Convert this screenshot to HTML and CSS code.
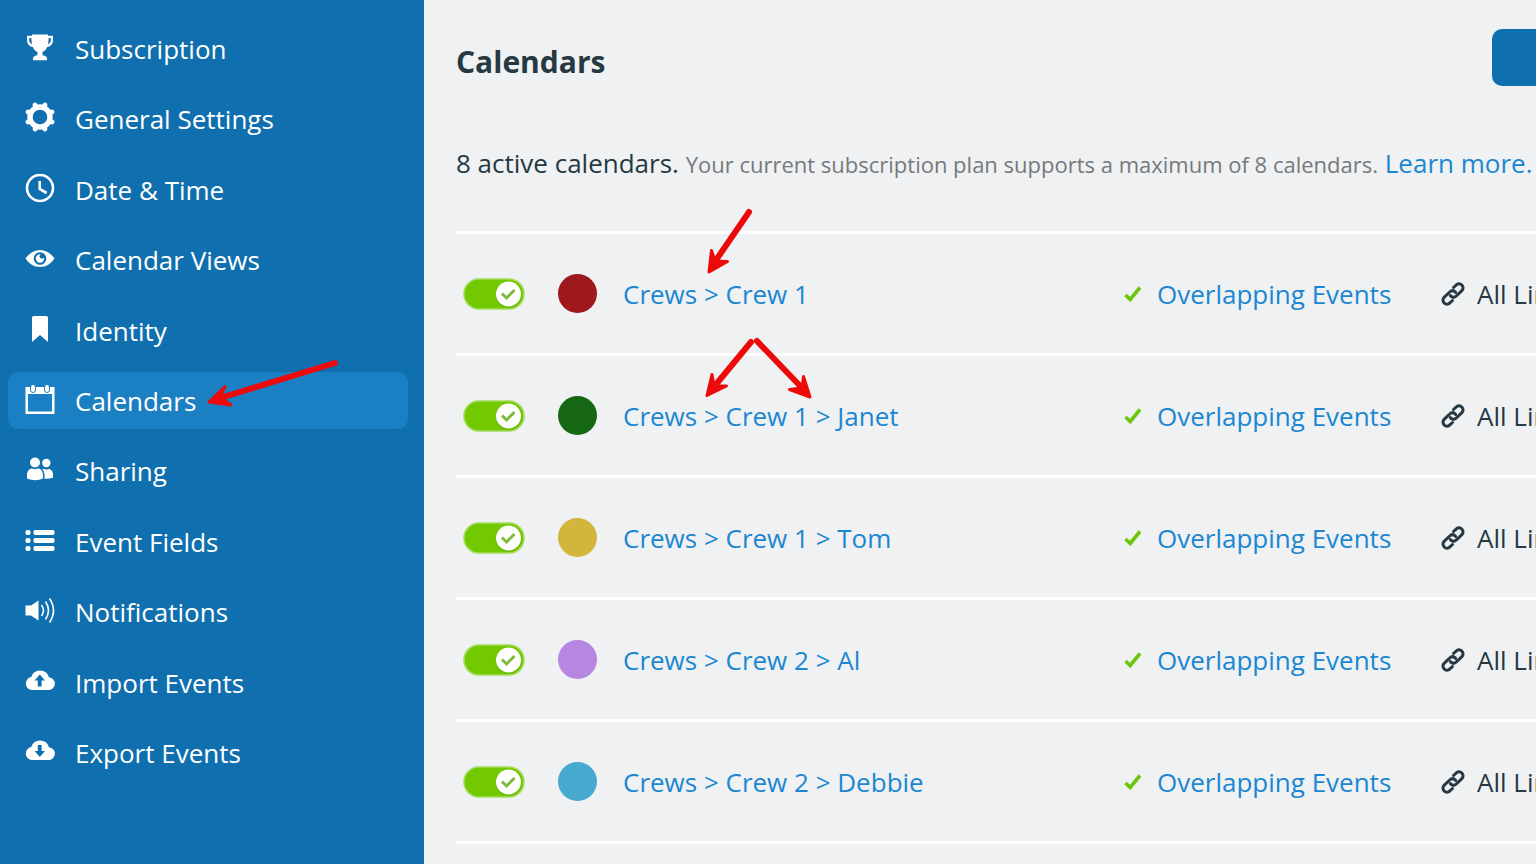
FILE: index.html
```
<!DOCTYPE html>
<html lang="en">
<head>
    <meta charset="UTF-8">
    <meta name="viewport" content="width=device-width, initial-scale=1.0">
    <title>Calendars</title>
    <link rel="stylesheet" href="styles.css">
</head>
<body>
    <!-- shared icons -->
    <svg class="sprite" aria-hidden="true">
        <symbol id="toggle-on" viewBox="0 0 62 32">
            <rect x="1" y="1" width="60" height="30" rx="15" fill="#73c900" stroke="#a3dc5c" stroke-width="1.5"/>
            <circle cx="45.500" cy="16.800" r="13" fill="#5aa500" opacity="0.5"/>
            <circle cx="45.500" cy="16" r="12.500" fill="#fff"/>
            <path d="M39 15.500l4.500 4.500 8-8" fill="none" stroke="#7dbb3c" stroke-width="3"/>
        </symbol>
        <symbol id="tick" viewBox="0 0 18 16">
            <path d="M1.500 9l4.700 4.500L16 1.500" fill="none" stroke="#6cc70c" stroke-width="3.600"/>
        </symbol>
        <symbol id="chain" viewBox="0 0 24 24">
            <g fill="none" stroke="#263943" stroke-width="3" stroke-linecap="round">
                <path d="M12.500 5.500l2.600-2.400a3.900 3.900 0 0 1 5.800 5.600l-5.600 5.300a4 4 0 0 1-5.300.3l-.7-.8"/>
                <path d="M11.500 18.500l-2.600 2.400a3.900 3.900 0 0 1-5.800-5.600l5.600-5.300a4 4 0 0 1 5.300-.3l.7.8"/>
            </g>
        </symbol>
    </svg>

    <div class="page">
        <nav class="sidebar">
            <a class="nav-item" href="#subscription">
                <svg class="nav-icon" viewBox="0 0 30 30"><path fill-rule="evenodd" d="M7 2.500h16v1.200h5V8c0 4-2.300 6.500-5.800 7-1 2.700-2.700 4.400-4.700 5v3.200c2 .4 4.500 1 4.500 3v2H8v-2c0-2 2.500-2.600 4.500-3V20c-2-.6-3.700-2.300-4.700-5C4.300 14.500 2 12 2 8V3.700h5zM4.200 6v2c0 2 .9 3.600 2.700 4.200L6.300 6zM23.700 6l-.6 6.200c1.800-.6 2.700-2.200 2.700-4.200V6z"/></svg>
                Subscription
            </a>
            <a class="nav-item" href="#general">
                <svg class="nav-icon" viewBox="0 0 30 30">
                    <circle cx="15" cy="15" r="10" fill="none" stroke="#fff" stroke-width="5.400"/>
                    <g stroke="#fff" stroke-width="4.600" stroke-linecap="round">
                        <path d="M20 2.900l-1 2.500M10 2.900l1 2.500M27.100 10l-2.500 1M27.100 20l-2.500-1M20 27.100l-1-2.500M10 27.100l1-2.500M2.900 20l2.500-1M2.900 10l2.500 1"/>
                    </g>
                </svg>
                General Settings
            </a>
            <a class="nav-item" href="#date-time">
                <svg class="nav-icon" viewBox="0 0 30 30"><g fill="none" stroke="#fff" stroke-width="2.600"><circle cx="15" cy="15" r="13"/><path d="M14.700 8v8l7 4"/></g></svg>
                Date &amp; Time
            </a>
            <a class="nav-item" href="#views">
                <svg class="nav-icon" viewBox="0 0 30 30">
                    <path d="M.5 15.500C4 10.500 9 7 15 7s11 3.500 14.500 8.500C26 20.500 21 24 15 24S4 20.500.5 15.500z"/>
                    <circle class="nav-icon-cut" cx="15" cy="15.500" r="6.300"/>
                    <circle cx="15" cy="15.500" r="4.200"/>
                    <circle class="nav-icon-cut" cx="17" cy="13.300" r="2.400"/>
                </svg>
                Calendar Views
            </a>
            <a class="nav-item" href="#identity">
                <svg class="nav-icon" viewBox="0 0 30 30"><path d="M8.500 2h13q1.500 0 1.500 1.500V28l-8-7-8 7V3.500Q7 2 8.500 2z"/></svg>
                Identity
            </a>
            <a class="nav-item active" href="#calendars" aria-current="page">
                <svg class="nav-icon" viewBox="0 0 30 30">
                    <path fill-rule="evenodd" d="M.5 3h29v27H.5zM3 10v17.500h24V10z"/>
                    <g class="nav-icon-ring"><rect x="5.500" y="0.500" width="5" height="8" rx="2.500"/><rect x="19.500" y="0.500" width="5" height="8" rx="2.500"/></g>
                </svg>
                Calendars
            </a>
            <a class="nav-item" href="#sharing">
                <svg class="nav-icon" viewBox="0 0 30 30">
                    <circle cx="10" cy="8.500" r="5"/>
                    <path d="M2 24.500v-3.500c0-4 2.500-6.500 5-6.500q3 1.500 6 0c2.500 0 5 2.500 5 6.500v3.500q-8 3.500-16 0z"/>
                    <circle cx="21.300" cy="9" r="4.200"/>
                    <path d="M19.500 24.700V21c0-2.600-1-4.600-2.300-6h2.300q2 1 4 0c2.500 0 4.500 2.300 4.500 5.500v3.300q-4 1.200-8.500.9z"/>
                </svg>
                Sharing
            </a>
            <a class="nav-item" href="#fields">
                <svg class="nav-icon" viewBox="0 0 30 30">
                    <g><rect x=".5" y="5" width="5" height="5" rx="1.800"/><rect x=".5" y="13" width="5" height="5" rx="1.800"/><rect x=".5" y="21" width="5" height="5" rx="1.800"/>
                    <rect x="8.500" y="5" width="21" height="5" rx="1.800"/><rect x="8.500" y="13" width="21" height="5" rx="1.800"/><rect x="8.500" y="21" width="21" height="5" rx="1.800"/></g>
                </svg>
                Event Fields
            </a>
            <a class="nav-item" href="#notifications">
                <svg class="nav-icon" viewBox="0 0 30 30">
                    <path d="M.5 10.500H6l7.500-5v20l-7.500-5H.5z"/>
                    <g fill="none" stroke="#fff" stroke-width="1.600"><path d="M16.500 10q4 5.500 0 11M20.500 6.500q6 9 0 18M24.500 3.500q8 12 0 24"/></g>
                </svg>
                Notifications
            </a>
            <a class="nav-item" href="#import">
                <svg class="nav-icon" viewBox="0 0 30 30"><path fill-rule="evenodd" d="M7 24a6.500 6.500 0 0 1-.8-12.900A9.300 9.300 0 0 1 24 11.200 6.400 6.400 0 0 1 23 24zM12.800 20.500h3.800V14.500h3.400L14.800 8.500 9.500 14.500h3.300z"/></svg>
                Import Events
            </a>
            <a class="nav-item" href="#export">
                <svg class="nav-icon" viewBox="0 0 30 30"><path fill-rule="evenodd" d="M7 24a6.500 6.500 0 0 1-.8-12.900A9.300 9.300 0 0 1 24 11.200 6.400 6.400 0 0 1 23 24zM12.800 9h3.800v6h3.400l-5.200 6-5.300-6h3.300z"/></svg>
                Export Events
            </a>
        </nav>

        <main class="content">
            <header class="content-header">
                <h1>Calendars</h1>
                <button class="add-button" type="button" aria-label="Add Calendar"></button>
            </header>
            <p class="summary">8 active calendars. <small>Your current subscription plan supports a maximum of 8 calendars.</small> <a href="#learn">Learn more.</a></p>

            <ul class="calendar-list">
                <li class="calendar">
                    <label class="toggle"><input type="checkbox" aria-label="Crew 1 active" checked><svg><use href="#toggle-on"/></svg></label>
                    <span class="dot red"></span>
                    <a href="#crew-1">Crews &gt; Crew 1</a>
                    <span class="overlap"><svg class="tick"><use href="#tick"/></svg><a href="#overlap">Overlapping Events</a></span>
                    <span class="links"><svg class="chain"><use href="#chain"/></svg>All Links</span>
                </li>
                <li class="calendar">
                    <label class="toggle"><input type="checkbox" aria-label="Janet active" checked><svg><use href="#toggle-on"/></svg></label>
                    <span class="dot green"></span>
                    <a href="#janet">Crews &gt; Crew 1 &gt; Janet</a>
                    <span class="overlap"><svg class="tick"><use href="#tick"/></svg><a href="#overlap">Overlapping Events</a></span>
                    <span class="links"><svg class="chain"><use href="#chain"/></svg>All Links</span>
                </li>
                <li class="calendar">
                    <label class="toggle"><input type="checkbox" aria-label="Tom active" checked><svg><use href="#toggle-on"/></svg></label>
                    <span class="dot gold"></span>
                    <a href="#tom">Crews &gt; Crew 1 &gt; Tom</a>
                    <span class="overlap"><svg class="tick"><use href="#tick"/></svg><a href="#overlap">Overlapping Events</a></span>
                    <span class="links"><svg class="chain"><use href="#chain"/></svg>All Links</span>
                </li>
                <li class="calendar">
                    <label class="toggle"><input type="checkbox" aria-label="Al active" checked><svg><use href="#toggle-on"/></svg></label>
                    <span class="dot purple"></span>
                    <a href="#al">Crews &gt; Crew 2 &gt; Al</a>
                    <span class="overlap"><svg class="tick"><use href="#tick"/></svg><a href="#overlap">Overlapping Events</a></span>
                    <span class="links"><svg class="chain"><use href="#chain"/></svg>All Links</span>
                </li>
                <li class="calendar">
                    <label class="toggle"><input type="checkbox" aria-label="Debbie active" checked><svg><use href="#toggle-on"/></svg></label>
                    <span class="dot blue"></span>
                    <a href="#debbie">Crews &gt; Crew 2 &gt; Debbie</a>
                    <span class="overlap"><svg class="tick"><use href="#tick"/></svg><a href="#overlap">Overlapping Events</a></span>
                    <span class="links"><svg class="chain"><use href="#chain"/></svg>All Links</span>
                </li>
            </ul>
        </main>

        <!-- red arrows drawn over the page -->
        <svg class="arrows" viewBox="0 0 860 440" aria-hidden="true">
            <g stroke="#ec0a0a" stroke-width="6" stroke-linecap="round">
                <path d="M335 363L220 398M749 212L714 263M751 342L713 388M757 341L804 390"/>
            </g>
            <g fill="#ec0a0a" stroke="#ec0a0a" stroke-width="3" stroke-linejoin="round">
                <path d="M209 402L225 386.500 220 397 231 405z"/>
                <path d="M709 272L711.500 250.500 715 261 727.500 261.500z"/>
                <path d="M707 395.500L712 374.500 714 386 726.500 386z"/>
                <path d="M810 397L803.500 376.500 802 388 789.500 389.500z"/>
            </g>
        </svg>
    </div>
</body>
</html>
```
FILE: styles.css
```
* {
    box-sizing: border-box;
}
body {
    margin: 0;
    background-color: #eff1f3;
    color: #263943;
    font-family: "Open Sans", sans-serif;
    font-size: 26px;
    line-height: 36px;
}
a {
    color: #1b87d0;
    text-decoration: none;
}
svg {
    display: block;
}
.sprite {
    display: none;
}
.page {
    position: relative;
    display: flex;
    height: 100vh;
    overflow: hidden;
}

/* sidebar */
.sidebar {
    flex: 0 0 424px;
    display: flex;
    flex-direction: column;
    justify-content: space-between;
    padding: 20px 16px 83px 8px;
    background-color: #106fae;
}
.nav-item {
    display: flex;
    align-items: center;
    gap: 20px;
    padding: 11px 17px 10px;
    border-radius: 10px;
    color: #fff;
}
.nav-item.active {
    background-color: #1b80c3;
}
.nav-icon {
    width: 30px;
    height: 30px;
    margin-bottom: 4px;
    fill: #fff;
}
.nav-icon-cut {
    fill: #106fae;
}
.nav-icon-ring {
    stroke: #1b80c3;
    stroke-width: 1;
}

/* content */
.content {
    flex: 1 0 1272px;
    padding: 29px 0 0 32px;
}
.content-header {
    display: flex;
    justify-content: space-between;
    align-items: center;
}
h1 {
    margin: 9px 0 0;
    font-size: 30px;
    line-height: 48px;
}
.add-button {
    width: 204px;
    height: 57px;
    border: none;
    border-radius: 10px;
    background-color: #106fae;
    cursor: pointer;
}
.summary {
    margin: 59px 0 49px;
}
.summary small {
    font-size: 22px;
    color: #76797b;
}
.calendar-list {
    margin: 0;
    padding: 0;
    list-style: none;
    border-top: 3px solid #fff;
}
.calendar {
    display: grid;
    grid-template-columns: 95px 65px 1fr 317px 255px;
    align-items: center;
    padding: 40px 0 40px 7px;
    border-bottom: 3px solid #fff;
}
.toggle {
    position: relative;
    width: 62px;
    height: 32px;
}
.toggle input {
    position: absolute;
    inset: 0;
    width: 100%;
    height: 100%;
    margin: 0;
    opacity: 0;
    cursor: pointer;
}
.toggle svg {
    width: 62px;
    height: 32px;
}
.dot {
    width: 39px;
    height: 39px;
    border-radius: 50%;
}
.red {
    background-color: #9d191b;
}
.green {
    background-color: #166713;
}
.gold {
    background-color: #d2b63c;
}
.purple {
    background-color: #b686e2;
}
.blue {
    background-color: #48a9cf;
}
.overlap {
    display: flex;
    align-items: center;
    gap: 15px;
}
.links {
    display: flex;
    align-items: center;
    gap: 12px;
}
.tick {
    width: 18px;
    height: 16px;
}
.chain {
    width: 24px;
    height: 24px;
}
.arrows {
    position: absolute;
    top: 0;
    left: 0;
    width: 860px;
    height: 440px;
    pointer-events: none;
}
```
